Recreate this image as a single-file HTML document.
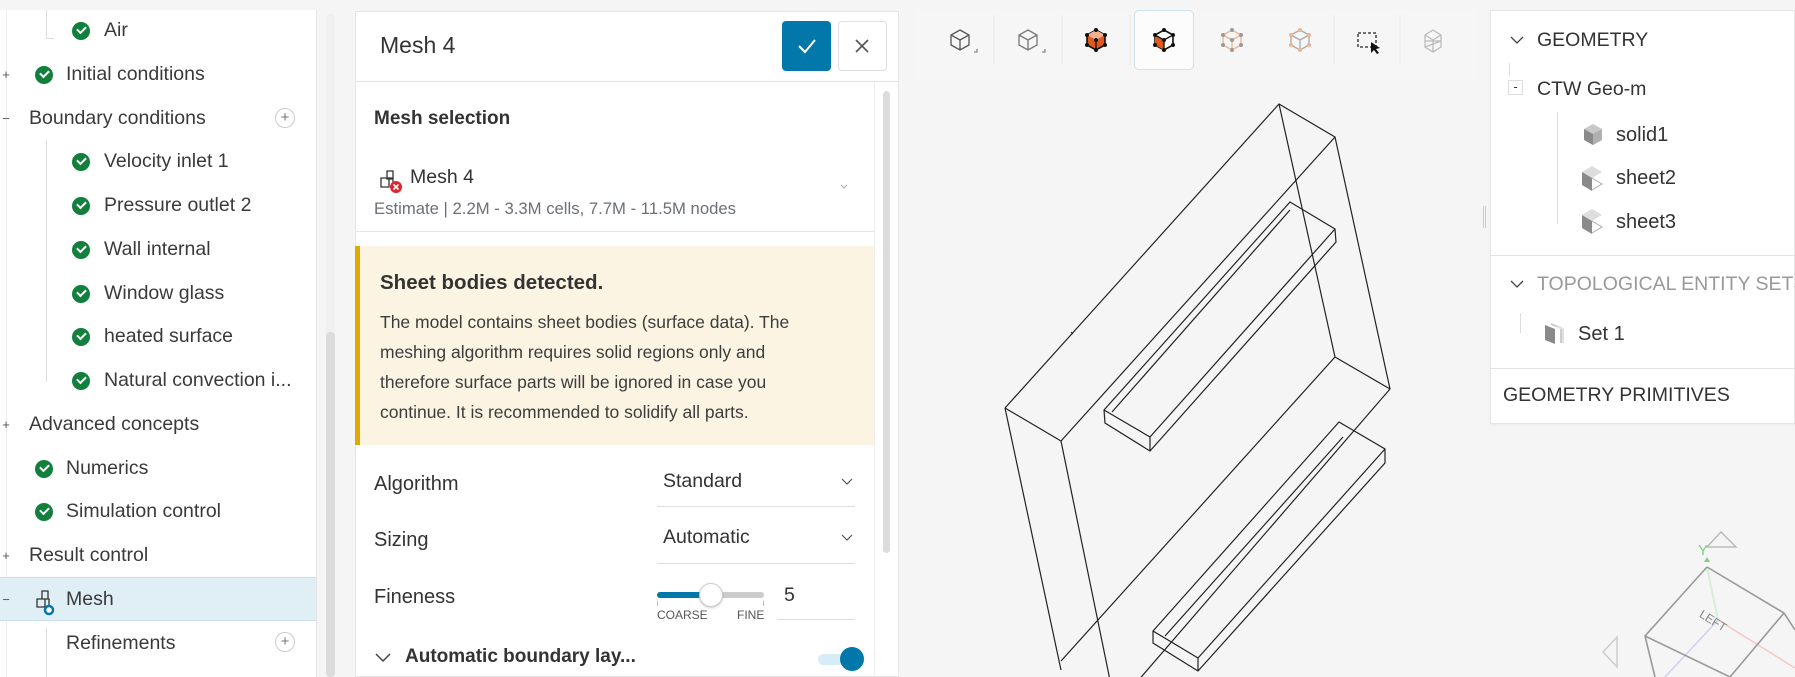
<!DOCTYPE html>
<html><head><meta charset="utf-8">
<style>
*{margin:0;padding:0;box-sizing:border-box}
body{width:1795px;height:677px;overflow:hidden;background:#f5f5f5;font-family:"Liberation Sans",sans-serif;color:#333;position:relative}
.a{position:absolute;white-space:nowrap}
.t{font-size:19.5px;color:#3a3a3a}
.ck{position:absolute;width:18px;height:18px;border-radius:50%;background:#12803d}
.ck:after{content:"";position:absolute;left:5px;top:4px;width:7px;height:4px;border-left:2.5px solid #fff;border-bottom:2.5px solid #fff;transform:rotate(-45deg)}
.pl{position:absolute;width:20px;height:20px;border:1px solid #ccc;border-radius:50%;color:#777;font-size:15px;line-height:18px;text-align:center;background:#fff}
.ex{position:absolute;left:0;width:12px;height:12px;color:#555;font-size:13px;line-height:12px;text-align:center}
.lab{font-size:20px;color:#333}
.val{font-size:19.5px;color:#333}
</style></head><body>

<!-- left panel -->
<div class="a" style="left:0;top:10px;width:317px;height:667px;background:#fff;border-right:1px solid #e6e6e6"></div>
<div class="a" style="left:326px;top:14px;width:9px;height:663px;background:#f0f0f0;border-radius:4px"></div>
<div class="a" style="left:326px;top:332px;width:9px;height:345px;background:#dcdcdc;border-radius:4px"></div>
<div class="a" style="left:46px;top:10px;width:1px;height:28px;background:#ddd"></div>
<div class="a" style="left:46px;top:38px;width:8px;height:1px;background:#ddd"></div>
<div class="a" style="left:46px;top:140px;width:1px;height:242px;background:#ddd"></div>
<div class="a" style="left:46px;top:628px;width:1px;height:49px;background:#ddd"></div>
<div class="a" style="left:6px;top:10px;width:1px;height:667px;background:#eee"></div>

<div class="a" style="left:0;top:577px;width:316px;height:44px;background:#e0eef6;border-top:1px solid #c8dfee;border-bottom:1px solid #c8dfee"></div>

<div class="ck" style="left:72px;top:22px"></div><div class="a t" style="left:104px;top:19px">Air</div>
<div class="ex" style="top:69px">+</div>
<div class="ck" style="left:35px;top:66px"></div><div class="a t" style="left:66px;top:63px">Initial conditions</div>
<div class="ex" style="top:113px">−</div>
<div class="a t" style="left:29px;top:107px">Boundary conditions</div><div class="pl" style="left:275px;top:108px">+</div>
<div class="ck" style="left:72px;top:153px"></div><div class="a t" style="left:104px;top:150px">Velocity inlet 1</div>
<div class="ck" style="left:72px;top:197px"></div><div class="a t" style="left:104px;top:194px">Pressure outlet 2</div>
<div class="ck" style="left:72px;top:241px"></div><div class="a t" style="left:104px;top:238px">Wall internal</div>
<div class="ck" style="left:72px;top:285px"></div><div class="a t" style="left:104px;top:282px">Window glass</div>
<div class="ck" style="left:72px;top:328px"></div><div class="a t" style="left:104px;top:325px">heated surface</div>
<div class="ck" style="left:72px;top:372px"></div><div class="a t" style="left:104px;top:369px">Natural convection i...</div>
<div class="ex" style="top:419px">+</div>
<div class="a t" style="left:29px;top:413px">Advanced concepts</div>
<div class="ck" style="left:35px;top:460px"></div><div class="a t" style="left:66px;top:457px">Numerics</div>
<div class="ck" style="left:35px;top:503px"></div><div class="a t" style="left:66px;top:500px">Simulation control</div>
<div class="ex" style="top:550px">+</div>
<div class="a t" style="left:29px;top:544px">Result control</div>
<div class="ex" style="top:594px">−</div>
<svg class="a" style="left:34px;top:588px" width="24" height="28" viewBox="0 0 24 28"><g fill="none" stroke="#333" stroke-width="1.3"><path d="M8 3h6v8H8z M3 11h8v8H3z M11 11h4v8"/></g><circle cx="15" cy="22" r="4" fill="#fff" stroke="#0277a9" stroke-width="2.5"/></svg>
<div class="a t" style="left:66px;top:588px">Mesh</div>
<div class="a t" style="left:66px;top:632px">Refinements</div><div class="pl" style="left:275px;top:632px">+</div>

<!-- middle panel -->
<div class="a" style="left:355px;top:11px;width:544px;height:666px;background:#fff;border:1px solid #e6e6e6"></div>
<div class="a" style="left:355px;top:81px;width:544px;height:1px;background:#e3e3e3"></div>
<div class="a" style="left:380px;top:32px;font-size:23px;color:#333">Mesh 4</div>
<div class="a" style="left:782px;top:21px;width:49px;height:50px;background:#0277a9;border-radius:4px"></div>
<svg class="a" style="left:796px;top:36px" width="22" height="20"><path d="M3 10l6 6L19 4" fill="none" stroke="#fff" stroke-width="2"/></svg>
<div class="a" style="left:838px;top:21px;width:49px;height:50px;border:1px solid #ddd;border-radius:4px;background:#fff"></div>
<svg class="a" style="left:855px;top:39px" width="14" height="14"><path d="M1 1l12 12M13 1L1 13" stroke="#555" stroke-width="1.6"/></svg>
<div class="a" style="left:874px;top:82px;width:1px;height:595px;background:#eee"></div>
<div class="a" style="left:883px;top:91px;width:7px;height:462px;background:#dcdcdc;border-radius:4px"></div>

<div class="a" style="left:374px;top:108px;font-size:19px;font-weight:bold;color:#333">Mesh selection</div>
<svg class="a" style="left:378px;top:168px" width="26" height="26" viewBox="0 0 26 26"><g fill="none" stroke="#333" stroke-width="1.3"><path d="M9 3h6v8H9z M3 10h8v9H3z M11 10h4v8"/></g><circle cx="18" cy="19" r="6" fill="#e02430"/><path d="M15.5 16.5l5 5M20.5 16.5l-5 5" stroke="#fff" stroke-width="1.6"/></svg>
<div class="a" style="left:410px;top:166px;font-size:19.5px;color:#333">Mesh 4</div>
<svg class="a" style="left:840px;top:184px" width="8" height="5"><path d="M1 1l3 3 3-3" fill="none" stroke="#aaa"/></svg>
<div class="a" style="left:374px;top:199px;font-size:16.7px;color:#6b7078">Estimate | 2.2M - 3.3M cells, 7.7M - 11.5M nodes</div>
<div class="a" style="left:355px;top:231px;width:519px;height:1px;background:#e6e6e6"></div>

<div class="a" style="left:355px;top:246px;width:519px;height:199px;background:#fbf4e3;border-left:5px solid #e0a800"></div>
<div class="a" style="left:380px;top:271px;font-size:20.5px;font-weight:bold;color:#333">Sheet bodies detected.</div>
<div class="a" style="left:380px;top:307px;font-size:17.5px;line-height:30px;color:#3d3d3d">The model contains sheet bodies (surface data). The<br>meshing algorithm requires solid regions only and<br>therefore surface parts will be ignored in case you<br>continue. It is recommended to solidify all parts.</div>

<div class="a lab" style="left:374px;top:473px">Algorithm</div>
<div class="a val" style="left:663px;top:470px">Standard</div>
<svg class="a" style="left:841px;top:478px" width="12" height="8"><path d="M1 1l5 5 5-5" fill="none" stroke="#555" stroke-width="1.2"/></svg>
<div class="a" style="left:657px;top:506px;width:198px;height:1px;background:#ddd"></div>
<div class="a lab" style="left:374px;top:529px">Sizing</div>
<div class="a val" style="left:663px;top:526px">Automatic</div>
<svg class="a" style="left:841px;top:534px" width="12" height="8"><path d="M1 1l5 5 5-5" fill="none" stroke="#555" stroke-width="1.2"/></svg>
<div class="a" style="left:657px;top:563px;width:198px;height:1px;background:#ddd"></div>
<div class="a lab" style="left:374px;top:586px">Fineness</div>
<div class="a" style="left:657px;top:592px;width:107px;height:6px;background:#ccc;border-radius:3px"></div>
<div class="a" style="left:657px;top:592px;width:54px;height:6px;background:#0277a9;border-radius:3px"></div>
<div class="a" style="left:699px;top:583px;width:24px;height:24px;border-radius:50%;background:#fff;border:1px solid #ccc;box-shadow:0 1px 2px rgba(0,0,0,.2)"></div>
<div class="a" style="left:657px;top:601px;width:1px;height:5px;background:#bbb"></div>
<div class="a" style="left:763px;top:601px;width:1px;height:5px;background:#bbb"></div>
<div class="a" style="left:657px;top:608px;font-size:12px;color:#555">COARSE</div>
<div class="a" style="left:737px;top:608px;font-size:12px;color:#555">FINE</div>
<div class="a" style="left:784px;top:584px;font-size:19.5px;color:#333">5</div>
<div class="a" style="left:777px;top:619px;width:78px;height:1px;background:#ddd"></div>

<svg class="a" style="left:375px;top:653px" width="16" height="10"><path d="M1 1l7 7 7-7" fill="none" stroke="#444" stroke-width="1.5"/></svg>
<div class="a" style="left:405px;top:646px;font-size:19px;font-weight:bold;color:#333">Automatic boundary lay...</div>
<div class="a" style="left:818px;top:654px;width:32px;height:11px;background:#d6ecf7;border-radius:6px"></div>
<div class="a" style="left:840px;top:647px;width:24px;height:24px;background:#0277a9;border-radius:50%"></div>

<!-- toolbar -->
<div class="a" style="left:916px;top:10px;width:560px;height:70px;background:#f6f6f6"></div>
<div class="a" style="left:1134px;top:10px;width:60px;height:60px;background:#fcfcfc;border:1px solid #cfe3ef;border-radius:5px"></div>
<svg class="a" style="left:930px;top:10px" width="530" height="60" viewBox="0 0 530 60">
 <g fill="none" stroke-width="1.3">
  <g transform="translate(30,30)" stroke="#555"><path d="M0-10l9 5v10l-9 5-9-5v-10z M-9-5l9 5 9-5 M0 0v10"/><path d="M14 12h3v-3" stroke="#888"/></g>
  <g transform="translate(98,30)" stroke="#777"><path d="M0-10l9 5v10l-9 5-9-5v-10z M-9-5l9 5 9-5 M0 0v10"/><path d="M14 12h3v-3" stroke="#888"/></g>
  <g transform="translate(166,30)"><path d="M0-10l9 5v10l-9 5-9-5v-10z" fill="#e05a1c" stroke="#111" stroke-width="1.6"/><path d="M0-10l9 5-9 5-9-5z" fill="#f4b190"/><path d="M0 0v10" stroke="#111"/><g fill="#111"><circle cx="0" cy="-10" r="2"/><circle cx="9" cy="-5" r="2"/><circle cx="9" cy="5" r="2"/><circle cx="0" cy="10" r="2"/><circle cx="-9" cy="5" r="2"/><circle cx="-9" cy="-5" r="2"/><circle cx="0" cy="0" r="2"/></g></g>
  <g transform="translate(234,30)"><path d="M0-10l9 5v10l-9 5-9-5v-10z" fill="#fff" stroke="#111" stroke-width="1.6"/><path d="M-9-5l9 5v10l-9-5z" fill="#e05a1c"/><path d="M-9-5l9 5 9-5 M0 0v10" stroke="#111"/><g fill="#111"><circle cx="0" cy="-10" r="2"/><circle cx="9" cy="-5" r="2"/><circle cx="9" cy="5" r="2"/><circle cx="0" cy="10" r="2"/><circle cx="-9" cy="5" r="2"/><circle cx="-9" cy="-5" r="2"/><circle cx="0" cy="0" r="2"/></g></g>
  <g transform="translate(302,30)" stroke="#f0b493"><path d="M0-10l9 5v10l-9 5-9-5v-10z M-9-5l9 5 9-5 M0 0v10"/><g fill="#999" stroke="none"><circle cx="0" cy="-10" r="2"/><circle cx="9" cy="-5" r="2"/><circle cx="9" cy="5" r="2"/><circle cx="0" cy="10" r="2"/><circle cx="-9" cy="5" r="2"/><circle cx="-9" cy="-5" r="2"/><circle cx="0" cy="0" r="2"/></g></g>
  <g transform="translate(370,30)" stroke="#aaa"><path d="M0-10l9 5v10l-9 5-9-5v-10z M-9-5l9 5 9-5 M0 0v10"/><g fill="#f0b493" stroke="none"><circle cx="0" cy="-10" r="2"/><circle cx="9" cy="-5" r="2"/><circle cx="9" cy="5" r="2"/><circle cx="0" cy="10" r="2"/><circle cx="-9" cy="5" r="2"/><circle cx="-9" cy="-5" r="2"/></g></g>
  <g transform="translate(437,30)"><rect x="-9" y="-7" width="18" height="14" stroke="#222" stroke-dasharray="3 2"/><path d="M4 2l0 11 3-3 3 4 2-1-3-4 4-1z" fill="#111" stroke="none"/></g>
  <g transform="translate(503,30)" stroke="#bbb"><path d="M0-10l8 5v12l-8 5-8-5v-12z M-8-5l8 5 8-5 M0 0v12 M-8 1l16 0 M-8 7l16-6"/></g>
 </g>
 <g stroke="#e8e8e8"><path d="M64 5v50M132 5v50M200 5v50M404 5v50M470 5v50"/></g>
</svg>

<!-- wireframe -->
<svg class="a" style="left:900px;top:0" width="700" height="677" viewBox="900 0 700 677">
 <g fill="none" stroke="#222" stroke-width="1.2">
  <path d="M1005 408L1279 104L1335 137L1390 389L1130 690"/>
  <path d="M1005 408L1061 441L1335 137"/>
  <path d="M1279 104L1335 357L1390 389"/>
  <path d="M1005 408L1061 670 M1061 441L1112 690 M1335 357L1061 661"/>
  <path d="M1104 410L1290 202L1335 229L1336 242L1150 451L1105 423Z M1104 410L1150 437L1335 229 M1150 437V451 M1290 210L1112 412"/>
  <path d="M1153 631L1339 422L1385 449L1385 463L1198 671L1153 643Z M1153 631L1198 658L1385 449 M1198 658V671 M1343 437L1165 636"/>
 </g>
 <path d="M1071 332l2 2" stroke="#222"/>
</svg>

<!-- nav cube -->
<svg class="a" style="left:1580px;top:520px" width="215" height="157" viewBox="0 0 215 157">
 <path d="M127 27L141 12L156 27Z" fill="none" stroke="#bbb" stroke-width="1.5"/>
 <path d="M37 117L23 132L37 147Z" fill="none" stroke="#ccc" stroke-width="1.5"/>
 <path d="M127 47L138 100" stroke="#d5f0d5" stroke-width="2"/>
 <path d="M138 100L215 148" stroke="#f5c8c8" stroke-width="1.5"/>
 <path d="M138 100L85 157" stroke="#d0d0f5" stroke-width="1.5"/>
 <path d="M124 42l3-5 3 5z" fill="#7ed07e"/>
 <text x="118" y="35" font-size="15" fill="#7ed07e" font-family="Liberation Sans">Y</text>
 <g fill="none" stroke="#999" stroke-width="1.6"><path d="M127 47L65 116L75 157 M65 116L150 157 M127 47L204 93L215 110 M204 93L150 157"/></g>
 <text x="118" y="102" font-size="12" fill="#888" transform="rotate(32 128 100)" font-family="Liberation Sans">LEFT</text>
</svg>

<!-- right panel -->
<div class="a" style="left:1490px;top:10px;width:305px;height:414px;background:#fff;border:1px solid #e6e6e6;box-shadow:0 1px 3px rgba(0,0,0,.05)"></div>
<div class="a" style="left:1483px;top:206px;width:3px;height:22px;border-left:1px solid #ccc;border-right:1px solid #ccc"></div>
<svg class="a" style="left:1510px;top:36px" width="14" height="9"><path d="M1 1l6 6 6-6" fill="none" stroke="#444" stroke-width="1.3"/></svg>
<div class="a" style="left:1537px;top:29px;font-size:19.5px;color:#333">GEOMETRY</div>
<div class="a" style="left:1509px;top:63px;width:1px;height:13px;background:#ddd"></div>
<div class="a" style="left:1508px;top:80px;width:15px;height:15px;border:1px solid #ddd;font-size:13px;line-height:12px;text-align:center;color:#333">-</div>
<div class="a" style="left:1537px;top:78px;font-size:19.5px;color:#333">CTW Geo-m</div>
<div class="a" style="left:1557px;top:112px;width:1px;height:112px;background:#ddd"></div>
<svg class="a" style="left:1582px;top:123px" width="22" height="24"><path d="M11 1l9 5v11l-9 5-9-5V6z" fill="#c8c8c8"/><path d="M2 6l9 5v11l-9-5z" fill="#8a8a8a"/><path d="M11 11l9-5v11l-9 5z" fill="#b0b0b0"/></svg>
<div class="a" style="left:1616px;top:124px;font-size:20px;color:#333">solid1</div>
<svg class="a" style="left:1580px;top:165px" width="26" height="28"><path d="M12 1l10 6-10 6-10-6z" fill="#ddd"/><path d="M2 7l10 6v13l-10-6z" fill="#8a8a8a"/><path d="M12 13l10 6-10 6" fill="none" stroke="#aaa"/></svg>
<div class="a" style="left:1616px;top:167px;font-size:20px;color:#333">sheet2</div>
<svg class="a" style="left:1580px;top:208px" width="26" height="28"><path d="M12 1l10 6-10 6-10-6z" fill="#ddd"/><path d="M2 7l10 6v13l-10-6z" fill="#8a8a8a"/><path d="M12 13l10 6-10 6" fill="none" stroke="#aaa"/></svg>
<div class="a" style="left:1616px;top:211px;font-size:20px;color:#333">sheet3</div>
<div class="a" style="left:1490px;top:255px;width:305px;height:1px;background:#e3e3e3"></div>
<svg class="a" style="left:1510px;top:280px" width="14" height="9"><path d="M1 1l6 6 6-6" fill="none" stroke="#444" stroke-width="1.3"/></svg>
<div class="a" style="left:1537px;top:273px;font-size:19.5px;color:#999">TOPOLOGICAL ENTITY SETS</div>
<div class="a" style="left:1520px;top:313px;width:1px;height:20px;background:#ddd"></div>
<svg class="a" style="left:1543px;top:322px" width="24" height="24"><path d="M2 3l10 4v15L2 18z" fill="#8a8a8a"/><path d="M8 2l10 4v15" fill="none" stroke="#ccc" stroke-width="2"/><path d="M14 4l6 3v14" fill="none" stroke="#e0e0e0" stroke-width="2"/></svg>
<div class="a" style="left:1578px;top:323px;font-size:20px;color:#333">Set 1</div>
<div class="a" style="left:1490px;top:368px;width:305px;height:1px;background:#e3e3e3"></div>
<div class="a" style="left:1503px;top:384px;font-size:19.5px;color:#333">GEOMETRY PRIMITIVES</div>

</body></html>
